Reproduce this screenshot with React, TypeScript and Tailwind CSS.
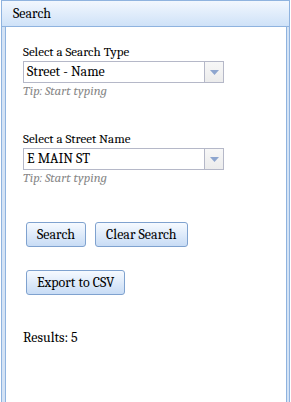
import { ReactNode } from "react";

function ComboField({ label, value }: { label: string; value: string }) {
  return (
    <div>
      <div className="text-[13px] leading-[15px] text-black">{label}</div>
      <div className="mt-[2px] flex h-[22px] w-[201px]">
        <div className="flex flex-1 items-center border border-[#b5b8c8] bg-white pl-[3px] text-[14px] leading-none text-black">
          {value}
        </div>
        <div className="flex w-[19px] items-center justify-center border border-l-0 border-[#b5b8c8] bg-gradient-to-b from-[#f7f7f7] to-[#ececec]">
          <svg width="9" height="5" viewBox="0 0 9 5">
            <path d="M0 0h9L4.5 5z" fill="#8ea6cf" />
          </svg>
        </div>
      </div>
      <div className="text-[13px] italic leading-[15px] text-[#888]">Tip: Start typing</div>
    </div>
  );
}

function Btn({ children }: { children: ReactNode }) {
  return (
    <button className="h-[25px] rounded-[3px] border border-[#7fa2cf] bg-gradient-to-b from-[#f6faff] to-[#c8dcf5] px-[10px] font-serif text-[14px] leading-none text-black">
      {children}
    </button>
  );
}

export default function App() {
  return (
    <div className="h-[402px] w-[291px] overflow-hidden bg-white font-serif">
      <div className="ml-px flex h-full w-[289px] flex-col border border-b-0 border-[#8fb3df] bg-[#d4e3f5]">
        <div className="flex h-[26px] shrink-0 items-center border-b border-[#8fb3df] bg-gradient-to-b from-[#f2f7fe] to-[#cfe2f8] pl-[11px] text-[14px] text-black">
          Search
        </div>
        <div className="ml-[3px] mr-[2px] flex flex-1 flex-col border-x border-[#8fb3df] bg-white pl-[17px] pt-[17px]">
          <ComboField label="Select a Search Type" value="Street - Name" />
          <div className="mt-[33px]">
            <ComboField label="Select a Street Name" value="E MAIN ST" />
          </div>
          <div className="mt-[37px] ml-[3px] flex gap-[9px]">
            <Btn>Search</Btn>
            <Btn>Clear Search</Btn>
          </div>
          <div className="mt-[23px] ml-[3px] flex">
            <Btn>Export to CSV</Btn>
          </div>
          <div className="mt-[35px] text-[14px] leading-[16px] text-black">Results: 5</div>
        </div>
      </div>
    </div>
  );
}
